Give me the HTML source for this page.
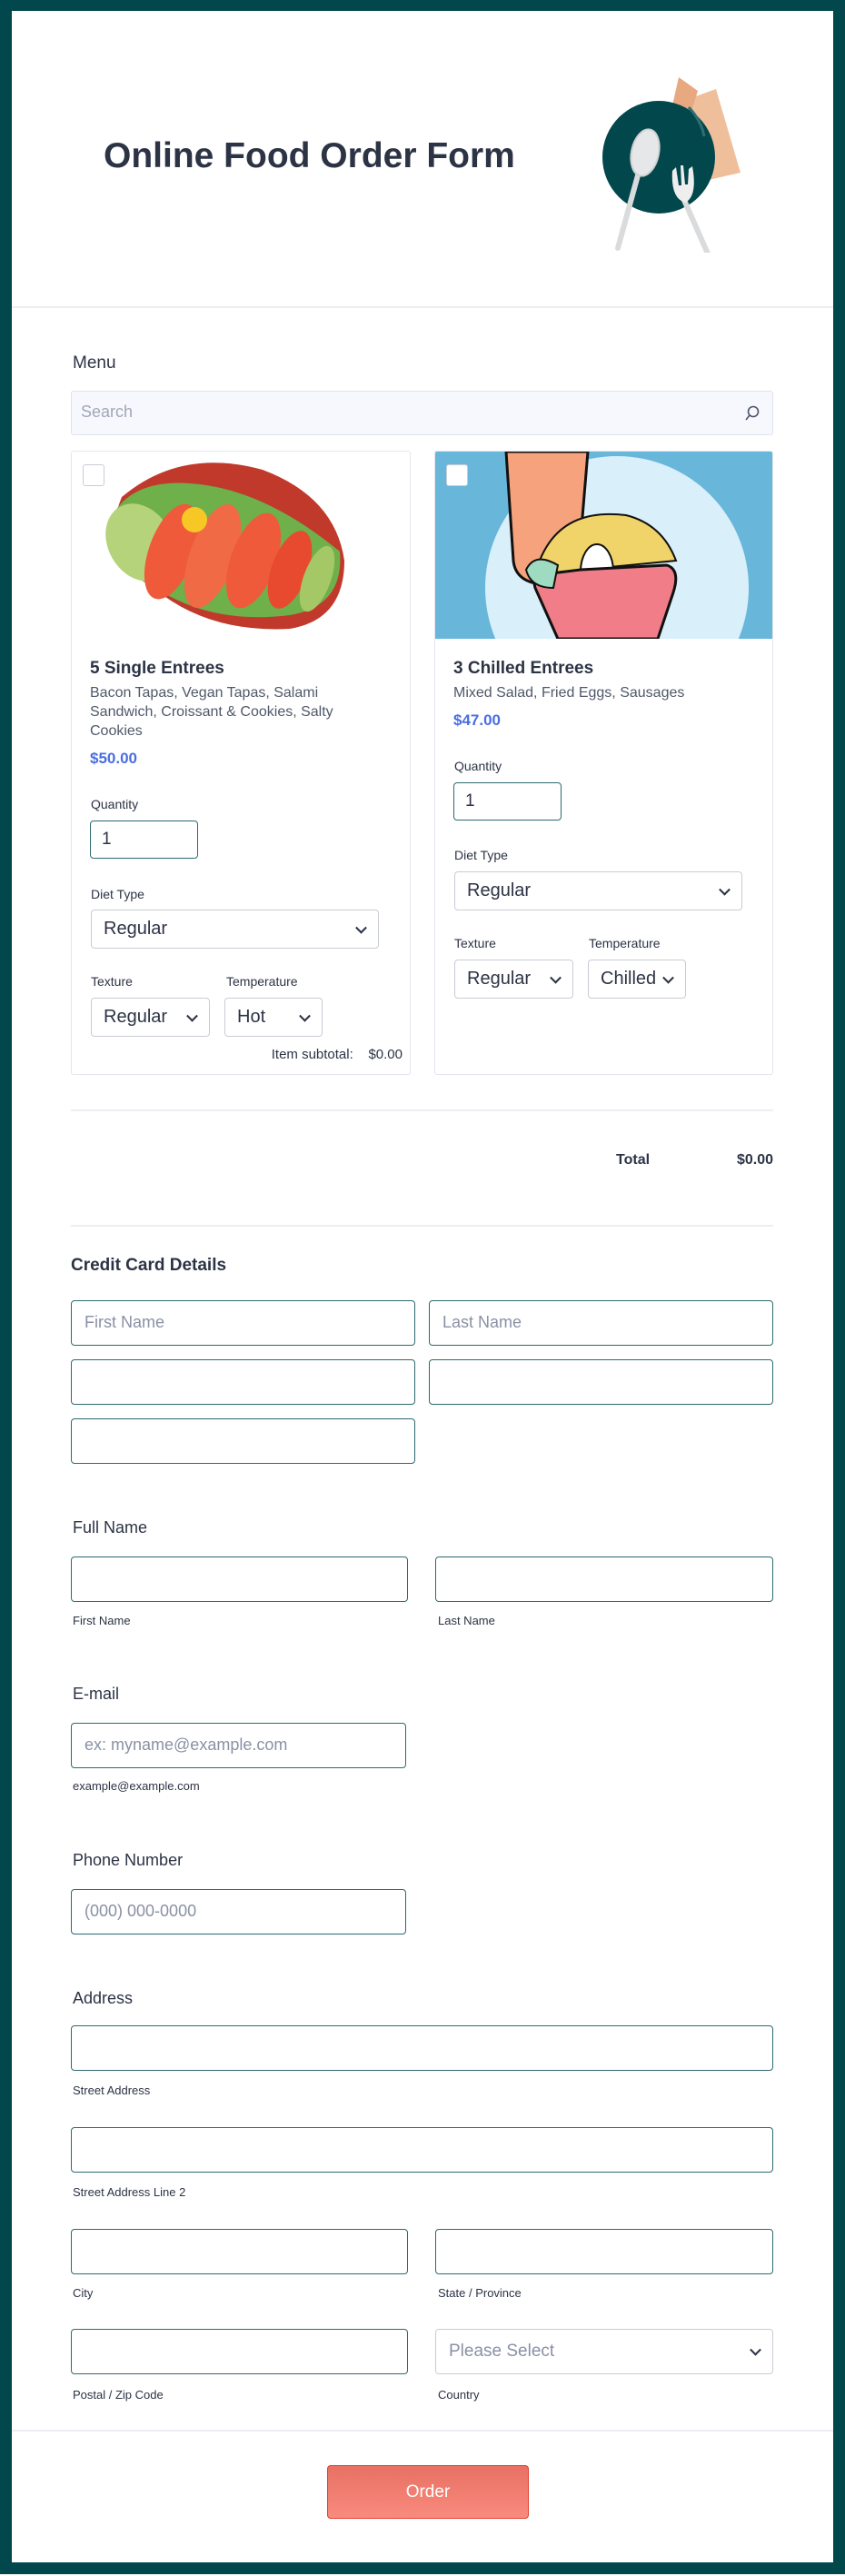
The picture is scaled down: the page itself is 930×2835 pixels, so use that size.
<!DOCTYPE html>
<html><head><meta charset="utf-8">
<style>
*{box-sizing:border-box;margin:0;padding:0}
html,body{width:930px;height:2835px;background:#fff;overflow:hidden}
body{font-family:"Liberation Sans",sans-serif;color:#2c3345;position:relative}
.frame{position:absolute;left:0;top:0;width:930px;height:2833px;border:solid #01474c;border-width:12px 13px 13px 13px;background:#fff}
.a{position:absolute}
.hr{position:absolute;left:13px;width:904px;height:2px;background:#eceef3}
.lbl{position:absolute;font-size:18px;color:#2c3345}
.sub{position:absolute;font-size:13px;color:#2c3345}
.small{position:absolute;font-size:14px;color:#2c3345}
.inp{position:absolute;border:1.5px solid #2d6a70;border-radius:4px;background:#fff;height:50px;font-size:18px;color:#8a91a5;padding-left:14px;line-height:47px}
.sel{position:absolute;border:1.5px solid #c8ccd5;border-radius:4px;background:#fff;font-size:20px;color:#2c3345;padding-left:13px}
.sel::after{content:"";position:absolute;right:14px;top:50%;width:7px;height:7px;border-right:2px solid #2c3345;border-bottom:2px solid #2c3345;transform:translateY(-70%) rotate(45deg)}
.card{position:absolute;border:1px solid #e3e6ee;border-radius:3px;background:#fff;overflow:hidden}
.cb{position:absolute;width:24px;height:24px;background:#fff;border:1px solid #c9cdd6;border-radius:3px}
</style></head><body>
<div class="frame"></div>

<div class="a" style="left:114px;top:150px;font-size:39px;font-weight:bold;color:#2c3345">Online Food Order Form</div>
<svg class="a" style="left:640px;top:78px" width="190" height="200" viewBox="0 0 190 200">
<polygon points="107,7 120,30 148,20 175,112 140,120" fill="#efbf9c"/>
<polygon points="107,7 128,22 120,48 95,60" fill="#e8a981"/>
<ellipse cx="85" cy="95" rx="62" ry="62" fill="#01474c"/>
<path d="M118,40 Q132,55 135,72" stroke="#2f6e72" stroke-width="3" fill="none"/>
<line x1="62" y1="115" x2="40" y2="195" stroke="#d9dbdd" stroke-width="6" stroke-linecap="round"/>
<ellipse cx="70" cy="90" rx="15" ry="26" fill="#e6e7e8" stroke="#cfd1d3" stroke-width="2" transform="rotate(12 70 90)"/>
<line x1="112" y1="140" x2="142" y2="208" stroke="#d9dbdd" stroke-width="6" stroke-linecap="round"/>
<path d="M100,110 Q98,140 114,145 Q128,138 122,105 L118,108 L117,125 L114,125 L112,104 L109,104 L110,126 L107,126 L104,106 Z" fill="#eeeeee"/>
</svg>

<div class="hr" style="top:337px"></div>

<div class="lbl" style="left:80px;top:389px;font-size:19px">Menu</div>
<div class="a" style="left:78px;top:430px;width:773px;height:49px;background:#f7f8fd;border:1px solid #dfe3ee;border-radius:3px"></div>
<div class="a" style="left:89px;top:443px;font-size:18px;color:#a0a7b8">Search</div>
<svg class="a" style="left:818px;top:445px" width="20" height="20" viewBox="0 0 20 20"><circle cx="11" cy="8" r="5.5" stroke="#4b5568" stroke-width="1.6" fill="none"/><line x1="7" y1="12" x2="3" y2="17" stroke="#4b5568" stroke-width="1.6"/></svg>

<!-- Left card -->
<div class="card" style="left:78px;top:496px;width:374px;height:687px">
<svg class="a" style="left:0;top:0" width="374" height="206" viewBox="0 0 374 206">
<rect width="374" height="206" fill="#fff"/>
<path d="M55,50 Q120,-5 210,20 Q290,50 300,120 Q300,185 240,195 Q150,200 90,150 Q30,110 55,50Z" fill="#c0392b"/>
<path d="M40,80 Q60,30 130,35 Q210,40 295,110 Q300,170 240,180 Q160,190 100,155 Q30,120 40,80Z" fill="#6fb04a"/>
<ellipse cx="75" cy="100" rx="35" ry="45" fill="#b5d37a" transform="rotate(-30 75 100)"/>
<ellipse cx="110" cy="110" rx="25" ry="55" fill="#ef5a3a" transform="rotate(20 110 110)"/>
<ellipse cx="155" cy="115" rx="25" ry="60" fill="#f06a45" transform="rotate(20 155 115)"/>
<ellipse cx="200" cy="120" rx="25" ry="55" fill="#ef5a3a" transform="rotate(20 200 120)"/>
<ellipse cx="240" cy="130" rx="20" ry="45" fill="#e84a2f" transform="rotate(20 240 130)"/>
<ellipse cx="270" cy="140" rx="15" ry="38" fill="#a5c866" transform="rotate(20 270 140)"/>
<circle cx="135" cy="75" r="14" fill="#f7c825"/>
</svg>
<div class="cb" style="left:12px;top:14px"></div>
<div class="a" style="left:20px;top:228px;font-size:19px;font-weight:bold">5 Single Entrees</div>
<div class="a" style="left:20px;top:255px;width:305px;font-size:16px;line-height:21px;color:#50586a">Bacon Tapas, Vegan Tapas, Salami Sandwich, Croissant &amp; Cookies, Salty Cookies</div>
<div class="a" style="left:20px;top:328px;font-size:17px;font-weight:bold;color:#4a6ee0">$50.00</div>
<div class="small" style="left:21px;top:380px">Quantity</div>
<div class="inp" style="left:20px;top:406px;width:119px;height:42px;line-height:39px;color:#2c3345;font-size:19px;padding-left:12px">1</div>
<div class="small" style="left:21px;top:479px">Diet Type</div>
<div class="sel" style="left:21px;top:504px;width:317px;height:43px;line-height:40px">Regular</div>
<div class="small" style="left:21px;top:575px">Texture</div>
<div class="small" style="left:170px;top:575px">Temperature</div>
<div class="sel" style="left:21px;top:601px;width:131px;height:43px;line-height:40px">Regular</div>
<div class="sel" style="left:168px;top:601px;width:108px;height:43px;line-height:40px">Hot</div>
<div class="a" style="right:8px;top:655px;font-size:15px;color:#2c3345">Item subtotal:&nbsp;&nbsp;&nbsp;&nbsp;$0.00</div>
</div>

<!-- Right card -->
<div class="card" style="left:478px;top:496px;width:373px;height:687px">
<svg class="a" style="left:0;top:0" width="373" height="206" viewBox="0 0 373 206">
<rect width="373" height="206" fill="#68b7db"/>
<circle cx="200" cy="150" r="145" fill="#d9f0fb"/>
<path d="M78,0 L168,0 L158,120 Q150,140 120,145 L110,145 Q88,140 86,120Z" fill="#f6a37d" stroke="#111" stroke-width="3"/>
<path d="M110,135 Q130,60 210,70 Q250,80 265,120 Z" fill="#f0d46a" stroke="#111" stroke-width="2"/>
<ellipse cx="178" cy="132" rx="18" ry="30" fill="#fff" stroke="#111" stroke-width="2"/>
<path d="M110,150 Q105,130 120,135 L160,130 L255,125 Q270,130 262,155 L245,206 L135,206 Z" fill="#f07d88" stroke="#111" stroke-width="3"/>
<path d="M100,130 Q110,110 135,125 L130,150 Q105,150 100,130Z" fill="#9fdbc0" stroke="#111" stroke-width="2"/>
</svg>
<div class="cb" style="left:12px;top:14px"></div>
<div class="a" style="left:20px;top:228px;font-size:19px;font-weight:bold">3 Chilled Entrees</div>
<div class="a" style="left:20px;top:255px;font-size:16px;line-height:21px;color:#50586a">Mixed Salad, Fried Eggs, Sausages</div>
<div class="a" style="left:20px;top:286px;font-size:17px;font-weight:bold;color:#4a6ee0">$47.00</div>
<div class="small" style="left:21px;top:338px">Quantity</div>
<div class="inp" style="left:20px;top:364px;width:119px;height:42px;line-height:39px;color:#2c3345;font-size:19px;padding-left:12px">1</div>
<div class="small" style="left:21px;top:436px">Diet Type</div>
<div class="sel" style="left:21px;top:462px;width:317px;height:43px;line-height:40px">Regular</div>
<div class="small" style="left:21px;top:533px">Texture</div>
<div class="small" style="left:169px;top:533px">Temperature</div>
<div class="sel" style="left:21px;top:559px;width:131px;height:43px;line-height:40px">Regular</div>
<div class="sel" style="left:168px;top:559px;width:108px;height:43px;line-height:40px">Chilled</div>
</div>

<div class="hr" style="top:1221px;left:78px;width:773px"></div>
<div class="a" style="left:678px;top:1268px;font-size:16px;font-weight:bold">Total</div>
<div class="a" style="right:79px;top:1268px;font-size:16px;font-weight:bold">$0.00</div>
<div class="hr" style="top:1348px;left:78px;width:773px"></div>

<div class="lbl" style="left:78px;top:1382px;font-size:19px;font-weight:bold">Credit Card Details</div>
<div class="inp" style="left:78px;top:1431px;width:379px">First Name</div>
<div class="inp" style="left:472px;top:1431px;width:379px">Last Name</div>
<div class="inp" style="left:78px;top:1496px;width:379px"></div>
<div class="inp" style="left:472px;top:1496px;width:379px"></div>
<div class="inp" style="left:78px;top:1561px;width:379px"></div>

<div class="lbl" style="left:80px;top:1671px">Full Name</div>
<div class="inp" style="left:78px;top:1713px;width:371px"></div>
<div class="inp" style="left:479px;top:1713px;width:372px"></div>
<div class="sub" style="left:80px;top:1776px">First Name</div>
<div class="sub" style="left:482px;top:1776px">Last Name</div>

<div class="lbl" style="left:80px;top:1854px">E-mail</div>
<div class="inp" style="left:78px;top:1896px;width:369px">ex: myname@example.com</div>
<div class="sub" style="left:80px;top:1958px">example@example.com</div>

<div class="lbl" style="left:80px;top:2037px">Phone Number</div>
<div class="inp" style="left:78px;top:2079px;width:369px">(000) 000-0000</div>

<div class="lbl" style="left:80px;top:2189px">Address</div>
<div class="inp" style="left:78px;top:2229px;width:773px"></div>
<div class="sub" style="left:80px;top:2293px">Street Address</div>
<div class="inp" style="left:78px;top:2341px;width:773px"></div>
<div class="sub" style="left:80px;top:2405px">Street Address Line 2</div>
<div class="inp" style="left:78px;top:2453px;width:371px"></div>
<div class="inp" style="left:479px;top:2453px;width:372px"></div>
<div class="sub" style="left:80px;top:2516px">City</div>
<div class="sub" style="left:482px;top:2516px">State / Province</div>
<div class="inp" style="left:78px;top:2563px;width:371px"></div>
<div class="sel" style="left:479px;top:2563px;width:372px;height:50px;line-height:47px;font-size:19px;color:#8a91a5;padding-left:14px">Please Select</div>
<div class="sub" style="left:80px;top:2628px">Postal / Zip Code</div>
<div class="sub" style="left:482px;top:2628px">Country</div>

<div class="hr" style="top:2674px"></div>
<div class="a" style="left:360px;top:2713px;width:222px;height:59px;border:1px solid #e33d30;border-radius:4px;background:linear-gradient(#e87163,#f88a7e);color:#fff;font-size:19px;text-align:center;line-height:57px">Order</div>
</body></html>
